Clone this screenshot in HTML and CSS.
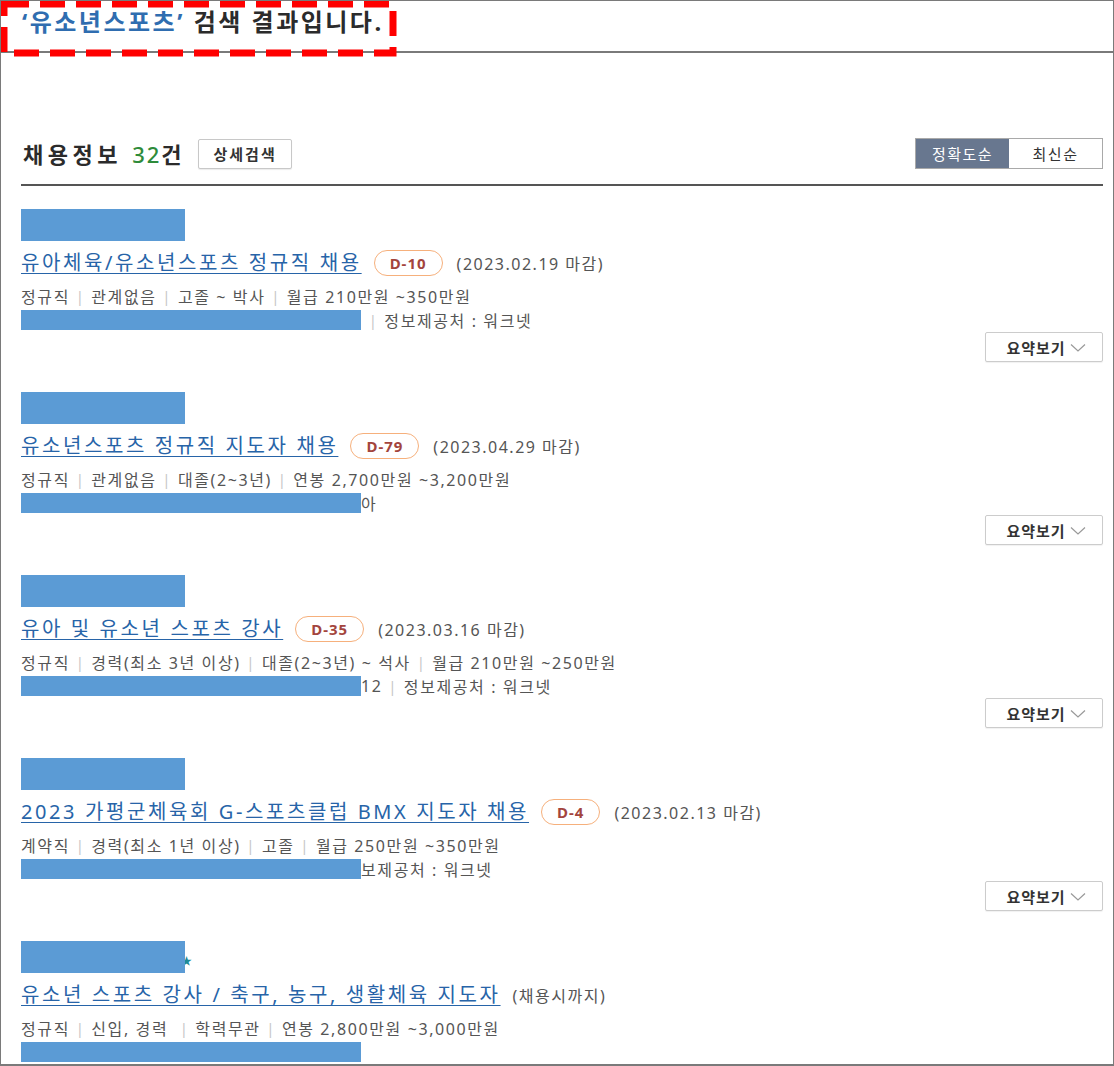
FILE: index.html
```html
<!DOCTYPE html>
<html lang="ko">
<head>
<meta charset="utf-8">
<title>검색 결과</title>
<link rel="stylesheet" href="styles.css">
</head>
<body>
<div class="frame">
  <header class="search-head">
    <h1 class="search-title"><span class="kw">‘유소년스포츠’</span> 검색 결과입니다.</h1>
    <svg class="dash" width="398" height="58" viewBox="0 0 398 58" aria-hidden="true">
      <rect x="4" y="4" width="389" height="49" fill="none" stroke="#ff0000" stroke-width="7" stroke-dasharray="25 11"/>
    </svg>
  </header>

  <section class="results">
    <div class="results-head">
      <div class="results-left">
        <h2 class="count-title">채용정보 <span class="count">32</span>건</h2>
        <button class="btn-detail">상세검색</button>
      </div>
      <div class="sort">
        <span class="sort-item active">정확도순</span>
        <span class="sort-item">최신순</span>
      </div>
    </div>

    <ul class="job-list">
      <li class="job">
        <div class="company"><span class="redact company-redact"></span></div>
        <div class="title-row">
          <a class="job-title" href="#">유아체육/유소년스포츠 정규직 채용</a>
          <span class="dday">D-10</span>
          <span class="deadline">(2023.02.19 마감)</span>
        </div>
        <p class="meta">정규직<span class="sep">|</span>관계없음<span class="sep">|</span>고졸 ~ 박사<span class="sep">|</span>월급 210만원 ~350만원</p>
        <p class="meta line2"><span class="redact line-redact"></span><span class="sep first">|</span>정보제공처 : 워크넷</p>
        <div class="actions"><button class="btn-summary">요약보기<svg class="chev" width="16" height="10" viewBox="0 0 16 10"><path d="M1 1.5 L8 8 L15 1.5" fill="none" stroke="#999" stroke-width="1.2"/></svg></button></div>
      </li>

      <li class="job">
        <div class="company"><span class="redact company-redact"></span></div>
        <div class="title-row">
          <a class="job-title" href="#">유소년스포츠 정규직 지도자 채용</a>
          <span class="dday">D-79</span>
          <span class="deadline">(2023.04.29 마감)</span>
        </div>
        <p class="meta">정규직<span class="sep">|</span>관계없음<span class="sep">|</span>대졸(2~3년)<span class="sep">|</span>연봉 2,700만원 ~3,200만원</p>
        <p class="meta line2"><span class="redact line-redact"></span>아</p>
        <div class="actions"><button class="btn-summary">요약보기<svg class="chev" width="16" height="10" viewBox="0 0 16 10"><path d="M1 1.5 L8 8 L15 1.5" fill="none" stroke="#999" stroke-width="1.2"/></svg></button></div>
      </li>

      <li class="job">
        <div class="company"><span class="redact company-redact"></span></div>
        <div class="title-row">
          <a class="job-title" href="#">유아 및 유소년 스포츠 강사</a>
          <span class="dday">D-35</span>
          <span class="deadline">(2023.03.16 마감)</span>
        </div>
        <p class="meta">정규직<span class="sep">|</span>경력(최소 3년 이상)<span class="sep">|</span>대졸(2~3년) ~ 석사<span class="sep">|</span>월급 210만원 ~250만원</p>
        <p class="meta line2"><span class="redact line-redact"></span>12<span class="sep">|</span>정보제공처 : 워크넷</p>
        <div class="actions"><button class="btn-summary">요약보기<svg class="chev" width="16" height="10" viewBox="0 0 16 10"><path d="M1 1.5 L8 8 L15 1.5" fill="none" stroke="#999" stroke-width="1.2"/></svg></button></div>
      </li>

      <li class="job">
        <div class="company"><span class="redact company-redact"></span></div>
        <div class="title-row">
          <a class="job-title" href="#">2023 가평군체육회 G-스포츠클럽 BMX 지도자 채용</a>
          <span class="dday">D-4</span>
          <span class="deadline">(2023.02.13 마감)</span>
        </div>
        <p class="meta">계약직<span class="sep">|</span>경력(최소 1년 이상)<span class="sep">|</span>고졸<span class="sep">|</span>월급 250만원 ~350만원</p>
        <p class="meta line2"><span class="redact line-redact"></span>보제공처 : 워크넷</p>
        <div class="actions"><button class="btn-summary">요약보기<svg class="chev" width="16" height="10" viewBox="0 0 16 10"><path d="M1 1.5 L8 8 L15 1.5" fill="none" stroke="#999" stroke-width="1.2"/></svg></button></div>
      </li>

      <li class="job">
        <div class="company"><span class="redact company-redact"></span><span class="star">★</span></div>
        <div class="title-row">
          <a class="job-title" href="#">유소년 스포츠 강사 / 축구, 농구, 생활체육 지도자</a>
          <span class="deadline">(채용시까지)</span>
        </div>
        <p class="meta">정규직<span class="sep">|</span>신입, 경력 <span class="sep">|</span>학력무관<span class="sep">|</span>연봉 2,800만원 ~3,000만원</p>
        <p class="meta line2"><span class="redact line-redact"></span></p>
      </li>
    </ul>
  </section>
</div>
</body>
</html>
```

FILE: styles.css
```css
* { box-sizing: border-box; }

html, body {
  margin: 0;
  padding: 0;
  background: #ffffff;
}

body {
  font-family: "Noto Sans", "Noto Sans CJK KR", sans-serif;
  color: #333333;
}

.frame {
  width: 1114px;
  height: 1066px;
  border: 1px solid #7a7a7a;
  border-bottom-width: 2px;
  overflow: hidden;
  position: relative;
  background: #ffffff;
}

/* ---------- search heading ---------- */
.search-head {
  height: 52px;
  border-bottom: 2px solid #7a7a7a;
  padding: 6px 0 0 21px;
}

.search-title {
  margin: 0;
  font-size: 24px;
  line-height: 30px;
  font-weight: 700;
  letter-spacing: 2.5px;
  color: #2b2b2b;
}

.kw { color: #2f6db0; }

.dash {
  position: absolute;
  left: -1px;
  top: -1px;
}

/* ---------- results ---------- */
.results {
  padding: 0 10px 0 20px;
}

.results-head {
  margin-top: 85px;
  display: flex;
  justify-content: space-between;
  align-items: center;
  padding-bottom: 15px;
  border-bottom: 2px solid #555555;
}

.results-left {
  display: flex;
  align-items: center;
  gap: 12px;
}

.count-title {
  margin: 0 0 0 2px;
  font-size: 22px;
  line-height: 30px;
  font-weight: 700;
  letter-spacing: 4.5px;
  color: #2b2b2b;
}

.count {
  color: #2e8b3a;
  font-weight: 500;
  letter-spacing: 2px;
}

.btn-detail {
  height: 30px;
  width: 94px;
  padding: 0;
  border: 1px solid #c8c8c8;
  border-radius: 2px;
  background: #ffffff;
  box-shadow: 0 1px 1px rgba(0, 0, 0, 0.08);
  font-family: inherit;
  font-size: 15px;
  font-weight: 700;
  letter-spacing: 2px;
  color: #333333;
}

.sort {
  display: flex;
  border: 1px solid #a9a9a9;
}

.sort-item {
  width: 93px;
  height: 29px;
  display: flex;
  align-items: center;
  justify-content: center;
  font-size: 15px;
  letter-spacing: 1.5px;
  color: #333333;
  background: #ffffff;
}

.sort-item.active {
  background: #68778f;
  color: #ffffff;
}

/* ---------- job list ---------- */
.job-list {
  list-style: none;
  margin: 23px 0 0 0;
  padding: 0;
}

.job {
  margin-bottom: 30px;
}

.company {
  display: flex;
  align-items: flex-end;
  height: 32px;
}

.redact {
  display: inline-block;
  background: #5b9bd5;
}

.company-redact {
  width: 164px;
  height: 32px;
  position: relative;
  z-index: 1;
}

.star {
  color: #1f8a96;
  font-size: 11px;
  line-height: 11px;
  margin: 0 0 7px -4px;
}

.title-row {
  margin-top: 9px;
  height: 26px;
  display: flex;
  align-items: center;
}

.job-title {
  font-size: 20px;
  line-height: 26px;
  letter-spacing: 2.6px;
  color: #2764a8;
  text-decoration: underline;
  text-underline-offset: 3px;
  text-decoration-thickness: 1px;
}

.dday {
  margin-left: 12px;
  height: 26px;
  padding: 0 15px;
  border: 1.5px solid #f6b07c;
  border-radius: 13px;
  display: flex;
  align-items: center;
  font-size: 15px;
  font-weight: 700;
  letter-spacing: 1px;
  color: #a3453d;
}

.deadline {
  margin-left: 14px;
  font-size: 16px;
  letter-spacing: 1.5px;
  color: #555555;
}

.job-title + .deadline { margin-left: 12px; }

.meta {
  margin: 9px 0 0 0;
  height: 22px;
  display: flex;
  align-items: center;
  font-size: 16px;
  letter-spacing: 1.6px;
  color: #555555;
  white-space: pre;
}

.meta.line2 {
  margin-top: 2px;
}

.sep {
  color: #c4c4c4;
  margin: 0 6px;
  font-size: 14px;
}

.sep.first { margin-left: 8px; }

.line-redact {
  width: 340px;
  height: 20px;
}

.actions {
  margin-top: 1px;
  display: flex;
  justify-content: flex-end;
}

.btn-summary {
  width: 118px;
  height: 30px;
  padding: 0 0 0 4px;
  display: flex;
  align-items: center;
  justify-content: center;
  gap: 4px;
  border: 1px solid #cccccc;
  border-radius: 2px;
  background: #ffffff;
  box-shadow: 0 1px 1px rgba(0, 0, 0, 0.06);
  font-family: inherit;
  font-size: 15px;
  font-weight: 700;
  letter-spacing: 1px;
  color: #333333;
}

.chev { margin-top: 1px; }
```
